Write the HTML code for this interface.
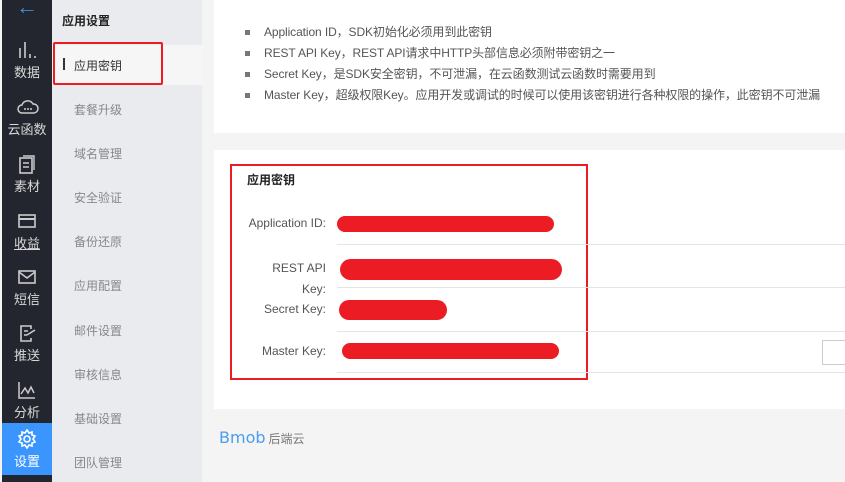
<!DOCTYPE html>
<html><head><meta charset="utf-8"><style>
*{margin:0;padding:0;box-sizing:border-box}
body{width:845px;height:482px;overflow:hidden;background:#f4f4f4;font-family:"Liberation Sans","Noto Sans CJK SC",sans-serif;position:relative}
.side{position:absolute;left:2px;top:0;width:50px;height:482px;background:#23262e}
.it{position:absolute;left:0;width:50px;height:52px;color:#d8d8d8;font-size:13px;text-align:center}
.it svg{position:absolute;left:15px;top:6px}
.it span{position:absolute;left:0;right:0;top:28px}
.sub{position:absolute;left:52px;top:0;width:150px;height:482px;background:#e9ebef}
.sub div{position:absolute;left:22px;font-size:12px;color:#888}
.card{position:absolute;left:214px;right:0;background:#fff}
ul{list-style:none}
li{position:absolute;left:50px;font-size:12px;color:#555;white-space:nowrap;letter-spacing:-0.1px}
li:before{content:"";position:absolute;left:-19px;top:7px;width:5px;height:5px;background:#777}
.lab{position:absolute;font-size:12px;color:#555;text-align:right;width:100px;left:226px}
.hl{position:absolute;left:337px;right:0;height:1px;background:#e5e5e5}
.red{position:absolute;background:#ec1c24;border-radius:8px}
</style></head><body>
<div class="side">
 <div style="position:absolute;left:14px;top:-6px;color:#3a8ee6;font-size:22px;font-weight:bold">←</div>
 <div class="it" style="top:34px"><svg width="20" height="20"><path d="M3 18V8M8 18V2M13 18v-4M18 18v-2" stroke="#ccc" stroke-width="1.6"/></svg><span>数据</span></div>
 <div class="it" style="top:91px"><svg width="22" height="20"><path d="M5 16a4 4 0 0 1 0-8 6 6 0 0 1 11-1 4.5 4.5 0 0 1 1 9z" fill="none" stroke="#ccc" stroke-width="1.5"/><circle cx="8" cy="12" r="1" fill="#ccc"/><circle cx="11" cy="12" r="1" fill="#ccc"/><circle cx="14" cy="12" r="1" fill="#ccc"/></svg><span>云函数</span></div>
 <div class="it" style="top:148px"><svg width="20" height="20"><rect x="3" y="4" width="12" height="15" fill="none" stroke="#ccc" stroke-width="1.6"/><path d="M6 2h11v14M6 9h6M6 13h6" fill="none" stroke="#ccc" stroke-width="1.4"/></svg><span>素材</span></div>
 <div class="it" style="top:205px"><svg width="20" height="20"><rect x="2" y="4" width="16" height="12" fill="none" stroke="#ccc" stroke-width="1.6"/><path d="M2 8h16" stroke="#ccc" stroke-width="2"/></svg><span style="text-decoration:underline">收益</span></div>
 <div class="it" style="top:261px"><svg width="20" height="20"><rect x="2" y="4" width="16" height="12" fill="none" stroke="#ccc" stroke-width="1.6"/><path d="M2 5l8 6 8-6" fill="none" stroke="#ccc" stroke-width="1.5"/></svg><span>短信</span></div>
 <div class="it" style="top:317px"><svg width="20" height="20"><path d="M14 6V3H4v15h10v-3M7 8h4M7 12h3M10 12l8-5" fill="none" stroke="#ccc" stroke-width="1.6"/></svg><span>推送</span></div>
 <div class="it" style="top:374px"><svg width="20" height="20"><path d="M2 2v16h16M4 14l4-6 3 5 3-6 3 6" fill="none" stroke="#ccc" stroke-width="1.5"/></svg><span>分析</span></div>
 <div class="it" style="top:423px;background:#3a95ff;color:#fff"><svg width="20" height="20"><path d="M10 1l2 3 3-1 0 3 3 1-2 3 2 3-3 1 0 3-3-1-2 3-2-3-3 1 0-3-3-1 2-3-2-3 3-1 0-3 3 1z" fill="none" stroke="#fff" stroke-width="1.6"/><circle cx="10" cy="10" r="3" fill="none" stroke="#fff" stroke-width="1.6"/></svg><span>设置</span></div>
</div>
<div class="sub">
 <div style="top:12px;left:10px;color:#222;font-weight:bold">应用设置</div>
 <div style="left:0;top:45px;width:150px;height:40px;background:#f6f6f6"></div>
 <div style="left:1px;top:42px;width:110px;height:43px;border:2px solid #ec1c24;border-radius:2px"></div>
 <div style="left:11px;top:58px;width:2px;height:12px;background:#333"></div>
 <div style="top:57px;color:#333">应用密钥</div>
 <div style="top:101px">套餐升级</div><div style="top:145px">域名管理</div><div style="top:189px">安全验证</div><div style="top:233px">备份还原</div><div style="top:277px">应用配置</div><div style="top:322px">邮件设置</div><div style="top:366px">审核信息</div><div style="top:410px">基础设置</div><div style="top:454px">团队管理</div>
</div>
<div class="card" style="top:0;height:133px">
 <ul><li style="top:23px">Application ID，SDK初始化必须用到此密钥</li><li style="top:44px">REST API Key，REST API请求中HTTP头部信息必须附带密钥之一</li><li style="top:65px">Secret Key，是SDK安全密钥，不可泄漏，在云函数测试云函数时需要用到</li><li style="top:86px">Master Key，超级权限Key。应用开发或调试的时候可以使用该密钥进行各种权限的操作，此密钥不可泄漏</li></ul>
</div>
<div class="card" style="top:150px;height:259px"></div>
<div style="position:absolute;left:230px;top:164px;width:358px;height:216px;border:2px solid #ec1c24"></div>
<div style="position:absolute;left:247px;top:171px;font-size:12px;font-weight:bold;color:#222">应用密钥</div>
<div class="lab" style="top:216px">Application ID:</div>
<div class="lab" style="top:258px;line-height:21px">REST API<br>Key:</div>
<div class="lab" style="top:302px">Secret Key:</div>
<div class="lab" style="top:344px">Master Key:</div>
<div class="hl" style="top:244px"></div><div class="hl" style="top:287px"></div><div class="hl" style="top:331px"></div><div class="hl" style="top:372px"></div>
<div style="position:absolute;left:822px;top:340px;width:30px;height:25px;border:1px solid #ccc;background:#fff"></div>
<div class="red" style="left:337px;top:216px;width:217px;height:16px"></div>
<div class="red" style="left:340px;top:259px;width:222px;height:21px;border-radius:11px"></div>
<div class="red" style="left:339px;top:300px;width:108px;height:20px;border-radius:10px"></div>
<div class="red" style="left:342px;top:343px;width:217px;height:16px"></div>
<div style="position:absolute;left:219px;top:428px;font-size:16px;color:#4a9df0;font-family:'DejaVu Sans',sans-serif">Bmob<span style="font-size:12px;color:#777;margin-left:3px;font-family:'Liberation Sans','Noto Sans CJK SC',sans-serif">后端云</span></div>
</body></html>
